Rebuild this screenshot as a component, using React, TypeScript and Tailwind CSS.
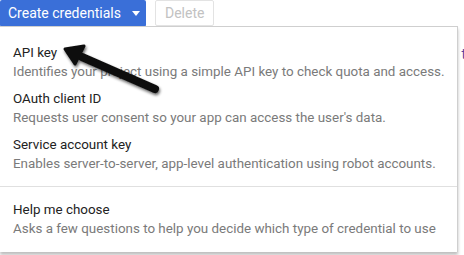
import React from "react";

const items = [
  {
    title: "API key",
    desc: "Identifies your project using a simple API key to check quota and access.",
  },
  {
    title: "OAuth client ID",
    desc: "Requests user consent so your app can access the user's data.",
  },
  {
    title: "Service account key",
    desc: "Enables server-to-server, app-level authentication using robot accounts.",
  },
];

function MenuItem({ title, desc }: { title: string; desc: string }) {
  return (
    <div className="whitespace-nowrap px-[13px] py-1">
      <div className="leading-[19px] text-[#222]">{title}</div>
      <div className="leading-[19px] text-[#7a7a7a]">{desc}</div>
    </div>
  );
}

function Arrow() {
  return (
    <svg
      className="pointer-events-none absolute left-0 top-0"
      width="464"
      height="255"
      viewBox="0 0 464 255"
    >
      <defs>
        <filter id="sh" x="-20%" y="-20%" width="140%" height="140%">
          <feGaussianBlur in="SourceAlpha" stdDeviation="1.5" />
          <feOffset dx="1" dy="2" />
          <feComponentTransfer>
            <feFuncA type="linear" slope="0.6" />
          </feComponentTransfer>
          <feMerge>
            <feMergeNode />
            <feMergeNode in="SourceGraphic" />
          </feMerge>
        </filter>
      </defs>
      <g filter="url(#sh)">
        <line x1="155" y1="89" x2="82" y2="57" stroke="#111" strokeWidth="8" strokeLinecap="round" />
        <polygon points="65,49 84,46 75,64" fill="#111" stroke="#111" strokeWidth="3" strokeLinejoin="round" />
      </g>
    </svg>
  );
}

export default function App() {
  return (
    <div
      className="relative h-[255px] w-[464px] overflow-hidden bg-white"
      style={{ fontFamily: "Roboto, 'Liberation Sans', sans-serif" }}
    >
      <div className="flex h-[27px] items-start gap-[9px]">
        <button className="flex h-[27px] w-[146px] items-center gap-[11px] rounded-[2px] bg-[#3a6fd8] pl-2 text-[14px] text-white">
          Create credentials
          <span className="h-0 w-0 border-x-[4px] border-t-[5px] border-x-transparent border-t-white" />
        </button>
        <button className="h-[26px] rounded-[2px] border border-[#e3e3e3] px-[9px] text-[14px] text-[#c2c2c2]">
          Delete
        </button>
      </div>

      <div className="flex justify-end pt-[17px] text-[14px] text-[#5b3fa0]">
        <span className="-mr-[2px]">t</span>
      </div>

      <div className="absolute left-0 top-[26px] w-[458px] border-r border-t border-[#cfcfcf] bg-white pb-[10px] pt-[12px] text-[13.4px] shadow-[0_3px_3px_rgba(0,0,0,0.25)]">
        {items.map((it) => (
          <MenuItem key={it.title} title={it.title} desc={it.desc} />
        ))}
        <div className="my-[9px] h-px bg-[#e0e0e0]" />
        <MenuItem
          title="Help me choose"
          desc="Asks a few questions to help you decide which type of credential to use"
        />
      </div>

      <Arrow />
    </div>
  );
}
